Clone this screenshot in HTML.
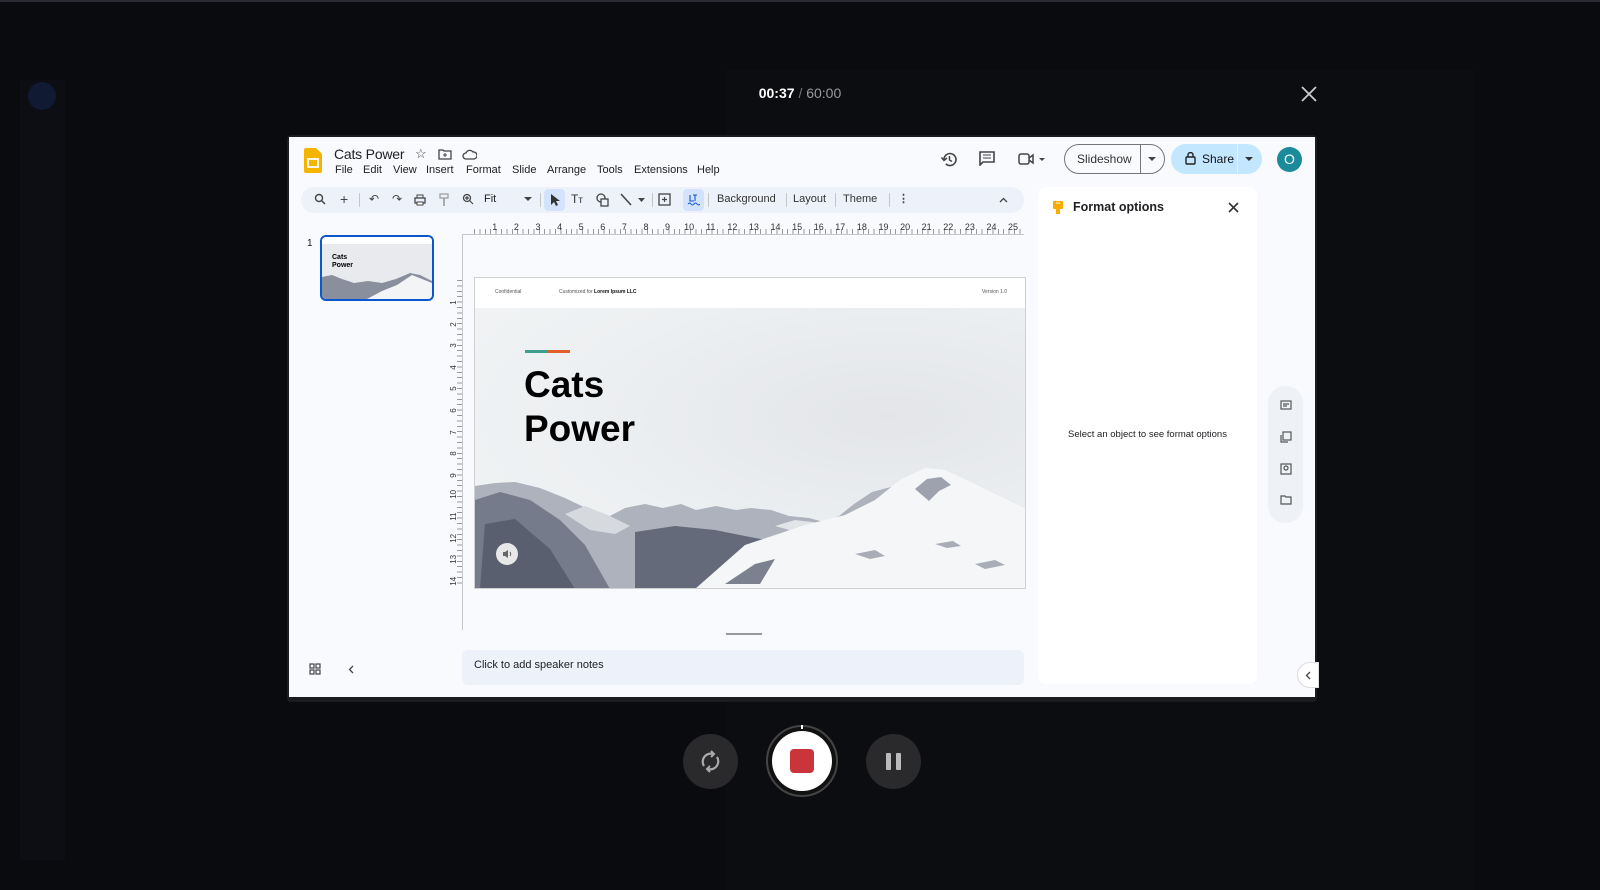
<!DOCTYPE html>
<html><head><meta charset="utf-8"><style>
*{box-sizing:border-box;margin:0;padding:0}
body{width:1600px;height:870px;background:#0a0b0f;font-family:"Liberation Sans",sans-serif;position:relative;overflow:hidden}
.a{position:absolute;white-space:nowrap}
.t{color:#202124;font-size:11px}
.m{position:absolute;top:164px;font-size:11px;color:#202124;white-space:nowrap}
.ti{position:absolute;top:192px;font-size:12px;color:#444;white-space:nowrap;line-height:14px}
.rn span{display:inline-block;width:21.6px;text-align:center}
.rv span{display:block;height:21.6px;line-height:21.6px;transform:rotate(-90deg)}
</style></head><body>
<div class="a" style="left:0;top:0;width:1600px;height:2px;background:#2a2c33"></div>
<div class="a" style="left:20px;top:80px;width:45px;height:780px;background:#0d0e13"></div>
<div class="a" style="left:28px;top:82px;width:28px;height:28px;border-radius:50%;background:#101a33"></div>
<div class="a" style="left:725px;top:70px;width:750px;height:820px;background:#0c0d11"></div>

<div class="a" style="left:0;top:85px;width:1600px;text-align:center;font-size:14px;color:#fff;font-weight:bold">00:37 <span style="color:#777;font-weight:normal">/</span> <span style="color:#9a9a9a;font-weight:normal">60:00</span></div>
<svg class="a" style="left:1300px;top:85px" width="18" height="18" viewBox="0 0 18 18"><path d="M2 2L16 16M16 2L2 16" stroke="#ccc" stroke-width="1.8"/></svg>

<div class="a" style="left:287px;top:135px;width:1030px;height:567px;background:#1b1c20;border-radius:4px"></div>
<div class="a" style="left:289px;top:137px;width:1026px;height:560px;background:#f8fafd"></div>

<svg class="a" style="left:304px;top:148px" width="18" height="25" viewBox="0 0 18 25"><path d="M0 2a2 2 0 0 1 2-2h10l6 6v17a2 2 0 0 1-2 2H2a2 2 0 0 1-2-2z" fill="#f4b400"/><rect x="4" y="11" width="10" height="8" fill="none" stroke="#fff" stroke-width="1.8"/></svg>
<div class="a" style="left:334px;top:146px;font-size:14px;color:#202124;letter-spacing:-0.2px">Cats Power</div>
<div class="a" style="left:415px;top:146px;font-size:13px;color:#444">☆</div>
<svg class="a" style="left:438px;top:148px" width="14" height="12"><path d="M1 2h4l1 1h7v8H1z" fill="none" stroke="#444" stroke-width="1.3"/><path d="M7 5v4M5 7h4" stroke="#444"/></svg>
<svg class="a" style="left:462px;top:148px" width="15" height="12"><path d="M4 11a3 3 0 0 1 0-6a4 4 0 0 1 7-1a3 3 0 0 1 1 7z" fill="none" stroke="#444" stroke-width="1.3"/></svg>
<div class="m" style="left:335px">File</div><div class="m" style="left:363px">Edit</div><div class="m" style="left:393px">View</div><div class="m" style="left:426px">Insert</div><div class="m" style="left:466px">Format</div><div class="m" style="left:512px">Slide</div><div class="m" style="left:547px">Arrange</div><div class="m" style="left:597px">Tools</div><div class="m" style="left:634px">Extensions</div><div class="m" style="left:697px">Help</div>

<svg class="a" style="left:941px;top:151px" width="17" height="17" viewBox="0 0 17 17"><path d="M3 8.5a6 6 0 1 1 1.8 4.3" fill="none" stroke="#444" stroke-width="1.6"/><path d="M0.5 6.5l2.5 3 3-2.5" fill="none" stroke="#444" stroke-width="1.5"/><path d="M8.5 5v4l2.5 1.5" fill="none" stroke="#444" stroke-width="1.5"/></svg>
<svg class="a" style="left:979px;top:151px" width="16" height="15"><path d="M1 1h14v10H4l-3 3z" fill="none" stroke="#444" stroke-width="1.6"/><path d="M4 4h8M4 7h8" stroke="#444"/></svg>
<svg class="a" style="left:1018px;top:153px" width="28" height="13"><rect x="1" y="1" width="10" height="10" rx="2" fill="none" stroke="#444" stroke-width="1.5"/><path d="M11 5l4-3v8l-4-3" fill="none" stroke="#444" stroke-width="1.5"/><path d="M21 5l3 3 3-3z" fill="#444"/></svg>
<div class="a" style="left:1064px;top:144px;width:101px;height:30px;border:1px solid #747775;border-radius:15px"></div>
<div class="a" style="left:1140px;top:144px;width:1px;height:30px;background:#747775"></div>
<div class="a" style="left:1077px;top:152px;font-size:12px;color:#333">Slideshow</div>
<svg class="a" style="left:1148px;top:157px" width="8" height="5"><path d="M0 0h8L4 4z" fill="#444"/></svg>
<div class="a" style="left:1171px;top:144px;width:91px;height:30px;background:#c2e7ff;border-radius:15px"></div>
<div class="a" style="left:1237px;top:144px;width:1px;height:30px;background:#e0f2ff"></div>
<svg class="a" style="left:1185px;top:152px" width="11" height="13"><rect x="1" y="5" width="9" height="7" rx="1" fill="none" stroke="#222" stroke-width="1.4"/><path d="M3 5V3a2.5 2.5 0 0 1 5 0v2" fill="none" stroke="#222" stroke-width="1.4"/></svg>
<div class="a" style="left:1202px;top:152px;font-size:12px;color:#111">Share</div>
<svg class="a" style="left:1245px;top:157px" width="8" height="5"><path d="M0 0h8L4 4z" fill="#333"/></svg>
<div class="a" style="left:1277px;top:147px;width:25px;height:25px;border-radius:50%;background:#1b8a9a;color:#fff;font-size:14px;text-align:center;line-height:25px">O</div>

<!-- toolbar -->
<div class="a" style="left:301px;top:187px;width:723px;height:26px;background:#edf2fa;border-radius:13px"></div>
<div class="a" style="left:544px;top:189px;width:21px;height:22px;background:#d3e3fd;border-radius:4px"></div>
<div class="a" style="left:683px;top:189px;width:21px;height:22px;background:#d3e3fd;border-radius:4px"></div>
<svg class="a" style="left:314px;top:193px" width="12" height="12"><circle cx="5" cy="5" r="3.5" fill="none" stroke="#444" stroke-width="1.4"/><path d="M7.5 7.5L11 11" stroke="#444" stroke-width="1.5"/></svg>
<div class="ti" style="left:340px;font-size:14px">+</div>
<div class="a" style="left:359px;top:193px;width:1px;height:14px;background:#c4c7c5"></div>
<div class="ti" style="left:369px">↶</div><div class="ti" style="left:392px">↷</div>
<svg class="a" style="left:414px;top:194px" width="12" height="12"><rect x="1" y="4" width="10" height="5" fill="none" stroke="#444" stroke-width="1.3"/><rect x="3" y="1" width="6" height="3" fill="none" stroke="#444"/><rect x="3" y="8" width="6" height="3" fill="#fff" stroke="#444"/></svg>
<svg class="a" style="left:439px;top:193px" width="10" height="14"><rect x="1" y="1" width="8" height="4" fill="none" stroke="#999" stroke-width="1.2"/><path d="M5 5v8" stroke="#999" stroke-width="1.6"/></svg>
<svg class="a" style="left:462px;top:193px" width="12" height="12"><circle cx="5" cy="5" r="3.5" fill="none" stroke="#444" stroke-width="1.3"/><path d="M7.5 7.5L11 11M5 3v4M3 5h4" stroke="#444" stroke-width="1.2"/></svg>
<div class="a t" style="left:484px;top:193px">Fit</div>
<svg class="a" style="left:524px;top:197px" width="8" height="5"><path d="M0 0h8L4 4z" fill="#444"/></svg>
<div class="a" style="left:540px;top:193px;width:1px;height:14px;background:#c4c7c5"></div>
<svg class="a" style="left:549px;top:193px" width="11" height="14"><path d="M2 1v11l3-3 2 4 2-1-2-4h4z" fill="#333"/></svg>
<div class="ti" style="left:571px;color:#333">T<span style="font-size:10px">т</span></div>
<svg class="a" style="left:596px;top:193px" width="14" height="14"><circle cx="5" cy="5" r="4" fill="none" stroke="#444" stroke-width="1.3"/><rect x="5" y="6" width="7" height="7" fill="#edf2fa" stroke="#444" stroke-width="1.3"/></svg>
<svg class="a" style="left:620px;top:193px" width="12" height="13"><path d="M1 1l10 11" stroke="#444" stroke-width="1.6"/></svg>
<svg class="a" style="left:638px;top:198px" width="7" height="4"><path d="M0 0h7L3.5 4z" fill="#444"/></svg>
<div class="a" style="left:652px;top:193px;width:1px;height:14px;background:#c4c7c5"></div>
<svg class="a" style="left:658px;top:193px" width="13" height="13"><rect x="1" y="1" width="11" height="11" fill="none" stroke="#444" stroke-width="1.3"/><path d="M6.5 4v5M4 6.5h5" stroke="#444" stroke-width="1.2"/></svg>
<svg class="a" style="left:687px;top:194px" width="13" height="12"><path d="M3 1v6h4M6 1h4M8 1v6" stroke="#0b57d0" stroke-width="1.1" fill="none"/><path d="M1 10q1.5-2 3 0t3 0 3 0 3 0" stroke="#0b57d0" fill="none"/></svg>
<div class="a" style="left:708px;top:193px;width:1px;height:14px;background:#c4c7c5"></div>
<div class="a t" style="left:717px;top:193px;color:#333">Background</div>
<div class="a" style="left:786px;top:193px;width:1px;height:14px;background:#c4c7c5"></div>
<div class="a t" style="left:793px;top:193px;color:#333">Layout</div>
<div class="a" style="left:835px;top:193px;width:1px;height:14px;background:#c4c7c5"></div>
<div class="a t" style="left:843px;top:193px;color:#333">Theme</div>
<div class="a" style="left:889px;top:193px;width:1px;height:14px;background:#c4c7c5"></div>
<div class="a t" style="left:898px;top:192px;color:#444;font-weight:bold">⋮</div>
<svg class="a" style="left:999px;top:197px" width="9" height="6"><path d="M1 5l3.5-3.5L8 5" fill="none" stroke="#444" stroke-width="1.3"/></svg>

<!-- thumbnail -->
<div class="a t" style="left:307px;top:238px;font-size:10px">1</div>
<div class="a" style="left:320px;top:235px;width:114px;height:66px;border:2px solid #0b57d0;border-radius:6px;overflow:hidden;background:#e8eaed">
 <div class="a" style="left:0;top:0;width:110px;height:7px;background:#fff"></div>
 <div class="a" style="left:10px;top:17px;font-size:7px;font-weight:bold;line-height:8px">Cats<br>Power</div>
 <svg class="a" style="left:0;bottom:0" width="110" height="28" viewBox="0 0 110 28"><path d="M0 6l10-2 10 4 12 4 14-2 14 2 14-4 14-6 10 2 12 6v24H0z" fill="#8a8f9e"/><path d="M45 28l15-8 15-6 15-10 20 8v16z" fill="#f3f4f6"/></svg>
</div>

<!-- rulers -->
<div class="a" style="left:474px;top:229px;width:550px;height:5px;background:repeating-linear-gradient(90deg,#999 0 1px,transparent 1px 5.4px)"></div>
<div class="a" style="left:462px;top:234px;width:562px;height:1px;background:#c4c7c5"></div>
<div class="a rn" style="left:484px;top:222px;font-size:9px;color:#333"><span>1</span><span>2</span><span>3</span><span>4</span><span>5</span><span>6</span><span>7</span><span>8</span><span>9</span><span>10</span><span>11</span><span>12</span><span>13</span><span>14</span><span>15</span><span>16</span><span>17</span><span>18</span><span>19</span><span>20</span><span>21</span><span>22</span><span>23</span><span>24</span><span>25</span></div>
<div class="a" style="left:462px;top:234px;width:1px;height:396px;background:#c4c7c5"></div>
<div class="a" style="left:457px;top:280px;width:5px;height:308px;background:repeating-linear-gradient(180deg,#999 0 1px,transparent 1px 5.4px)"></div>
<div class="a rv" style="left:449px;top:289px;font-size:8px;color:#333;width:10px"><span>1</span><span>2</span><span>3</span><span>4</span><span>5</span><span>6</span><span>7</span><span>8</span><span>9</span><span>10</span><span>11</span><span>12</span><span>13</span><span>14</span></div>

<!-- slide -->
<div class="a" style="left:474px;top:277px;width:552px;height:312px;border:1px solid #d0d0d0;background:radial-gradient(ellipse at 75% 45%,#e3e5e8,#edf0f2 55%,#f2f4f5);overflow:hidden">
 <div class="a" style="left:0;top:0;width:552px;height:30px;background:#fff"></div>
 <div class="a" style="left:20px;top:11px;font-size:5px;color:#555">Confidential</div>
 <div class="a" style="left:84px;top:11px;font-size:5px;color:#555">Customized for <b style="color:#111">Lorem Ipsum LLC</b></div>
 <div class="a" style="right:18px;top:11px;font-size:5px;color:#555">Version 1.0</div>
 <div class="a" style="left:50px;top:72px;width:23px;height:3px;background:#3e9e8e"></div>
 <div class="a" style="left:73px;top:72px;width:22px;height:3px;background:#e0612c"></div>
 <div class="a" style="left:49px;top:85px;font-size:37px;font-weight:bold;color:#000;line-height:44px">Cats<br>Power</div>
 <svg class="a" style="left:0;top:0" width="551" height="311" viewBox="0 0 551 311">
  <g transform="translate(0,-14)">
  <path d="M0 222l20-3 20-1 25 6 25 10 25 12 20 6 15-8 20-4 18 4 18-4 15 6 20-4 20 4 15-2 20 2 18 6 20 2 15 4 15-6 15-12 18-12 15-4 15-4 20 6 20 10 25 12v94H0z" fill="#aeb2bc"/>
  <path d="M0 236l25-8 30 8 30 20 25 25 25 44H0z" fill="#767b8b"/>
  <path d="M10 260l30-5 35 30 25 40H5z" fill="#555a6a" opacity=".85"/>
  <path d="M160 268l40-6 40 4 40 8 30 5-40 20-30 26h-80z" fill="#656a7a"/>
  <path d="M90 250l20-8 25 10 20 10-15 8-25-4z" fill="#d6d9de"/>
  <path d="M300 262l20-6 25 3-20 10z" fill="#e2e4e8"/>
  <path d="M220 325l50-44 60-20 40-10 30-15 25-20 25-12 20 2 30 14 51 25v80z" fill="#f5f6f7"/>
  <path d="M440 225l12-10 14-2 10 8-12 6-10 10z" fill="#9da2ae"/>
  <path d="M250 320l30-20 20-5-15 25z" fill="#7c8190"/>
  <path d="M380 290l20-4 10 6-15 3zM460 280l18-3 8 5-14 2zM500 300l20-4 10 5-20 4z" fill="#a8adb8"/>
  </g>
 </svg>
 <div class="a" style="left:21px;top:265px;width:22px;height:22px;border-radius:50%;background:#e8e8e8"></div>
 <svg class="a" style="left:27px;top:271px" width="11" height="10"><path d="M1 3h2l3-2v8L3 7H1z" fill="#666"/><path d="M8 3q1.5 2 0 4" stroke="#666" fill="none"/></svg>
</div>

<div class="a" style="left:726px;top:633px;width:36px;height:2px;background:#999"></div>
<div class="a" style="left:462px;top:650px;width:562px;height:35px;background:#edf2fa;border-radius:6px"></div>
<div class="a t" style="left:474px;top:659px">Click to add speaker notes</div>
<svg class="a" style="left:309px;top:663px" width="12" height="12"><g fill="none" stroke="#444" stroke-width="1.2"><rect x="1" y="1" width="4" height="4"/><rect x="7" y="1" width="4" height="4"/><rect x="1" y="7" width="4" height="4"/><rect x="7" y="7" width="4" height="4"/></g></svg>
<svg class="a" style="left:348px;top:665px" width="6" height="9"><path d="M5 1L1.5 4.5 5 8" fill="none" stroke="#444" stroke-width="1.3"/></svg>

<!-- format options -->
<div class="a" style="left:1038px;top:187px;width:219px;height:497px;background:#fff;border-radius:8px"></div>
<svg class="a" style="left:1052px;top:200px" width="12" height="15"><rect x="1" y="1" width="10" height="8" rx="1" fill="#f9ab00"/><rect x="4" y="9" width="4" height="5" fill="#f9ab00"/><path d="M4 3h4" stroke="#fff"/></svg>
<div class="a" style="left:1073px;top:200px;font-size:12.5px;font-weight:bold;color:#202124">Format options</div>
<svg class="a" style="left:1228px;top:202px" width="11" height="11"><path d="M1 1l9 9M10 1l-9 9" stroke="#333" stroke-width="1.6"/></svg>
<div class="a" style="left:1038px;top:429px;width:219px;text-align:center;font-size:9.5px;color:#202124">Select an object to see format options</div>
<div class="a" style="left:1268px;top:386px;width:35px;height:137px;background:#eef1f6;border-radius:17px"></div>
<svg class="a" style="left:1280px;top:400px" width="12" height="110"><g fill="none" stroke="#555" stroke-width="1.2"><rect x="1" y="1" width="10" height="8"/><path d="M3 4h6M3 6h4"/><rect x="3" y="32" width="8" height="8"/><path d="M1 35v7h7"/><rect x="1" y="64" width="10" height="10"/><circle cx="6" cy="68" r="2"/><path d="M1 96h4l1 1h5v7H1z"/></g></svg>
<div class="a" style="left:1297px;top:662px;width:22px;height:26px;border-radius:13px 0 0 13px;background:#fff;border:1px solid #ddd"></div>
<svg class="a" style="left:1305px;top:671px" width="6" height="9"><path d="M5 1L1.5 4.5 5 8" fill="none" stroke="#444" stroke-width="1.3"/></svg>

<!-- controls -->
<div class="a" style="left:683px;top:734px;width:55px;height:55px;border-radius:50%;background:#2a2a2c"></div>
<svg class="a" style="left:698px;top:749px" width="25" height="25" viewBox="0 0 25 25"><path d="M6 17a8 8 0 0 1 9-12M19 8a8 8 0 0 1-9 12" fill="none" stroke="#aaa" stroke-width="2.2"/><path d="M13 2l3 3-3 3M12 17l-3 3 3 3" fill="none" stroke="#aaa" stroke-width="2"/></svg>
<div class="a" style="left:766px;top:725px;width:72px;height:72px;border-radius:50%;border:2px solid #444;background:#111"></div>
<div class="a" style="left:772px;top:731px;width:60px;height:60px;border-radius:50%;background:#fff"></div>
<div class="a" style="left:801px;top:725px;width:2px;height:4px;background:#fff"></div>
<div class="a" style="left:790px;top:749px;width:24px;height:24px;border-radius:4px;background:#c9353b"></div>
<div class="a" style="left:866px;top:734px;width:55px;height:55px;border-radius:50%;background:#2a2a2c"></div>
<div class="a" style="left:886px;top:753px;width:5px;height:17px;background:#bbb;border-radius:1px"></div>
<div class="a" style="left:896px;top:753px;width:5px;height:17px;background:#bbb;border-radius:1px"></div>
</body></html>
